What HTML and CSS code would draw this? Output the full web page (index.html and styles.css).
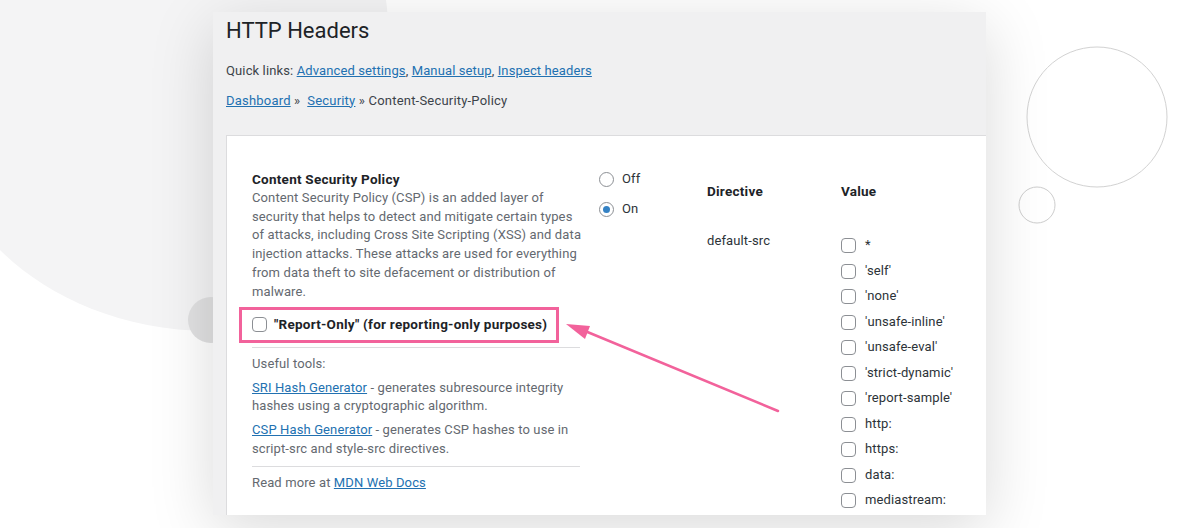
FILE: index.html
```html
<!DOCTYPE html>
<html lang="en">
<head>
    <meta charset="UTF-8">
    <title>HTTP Headers</title>
    <link rel="stylesheet" href="styles.css">
</head>
<body>
    <svg class="backdrop" width="1200" height="528" viewBox="0 0 1200 528">
        <path d="M0 0 H386 C400 90 330 331 210 331 C120 331 45 295 0 250 Z" fill="#f4f4f5"/>
        <circle cx="211" cy="320" r="23" fill="#e1e1e2"/>
        <circle cx="1097" cy="117" r="70" fill="none" stroke="#d2d2d2"/>
        <circle cx="1037" cy="205" r="18" fill="none" stroke="#cdcdcd"/>
    </svg>

    <div class="window">
        <div class="wrap">
            <h1>HTTP Headers</h1>
            <p class="quick">Quick links: <a href="#">Advanced settings</a>, <a href="#">Manual setup</a>, <a href="#">Inspect headers</a></p>
            <p class="crumbs"><a href="#">Dashboard</a> &raquo; &nbsp;<a href="#">Security</a> &raquo; Content-Security-Policy</p>

            <div class="panel">
                <div class="info">
                    <h3>Content Security Policy</h3>
                    <p class="desc">Content Security Policy (CSP) is an added layer of security that helps to detect and mitigate certain types of attacks, including Cross Site Scripting (XSS) and data injection attacks. These attacks are used for everything from data theft to site defacement or distribution of malware.</p>
                    <label class="report-only"><span class="cb"></span>"Report-Only" (for reporting-only purposes)</label>
                    <div class="tools">
                        <p>Useful tools:</p>
                        <p><a href="#">SRI Hash Generator</a> - generates subresource integrity hashes using a cryptographic algorithm.</p>
                        <p><a href="#">CSP Hash Generator</a> - generates CSP hashes to use in script-src and style-src directives.</p>
                    </div>
                    <p class="more">Read more at <a href="#">MDN Web Docs</a></p>
                </div>

                <div class="switch">
                    <label><span class="radio"></span>Off</label>
                    <label><span class="radio on"></span>On</label>
                </div>

                <div class="directive">
                    <div class="col-head">Directive</div>
                    <div class="dir-name">default-src</div>
                </div>

                <div class="values">
                    <div class="col-head">Value</div>
                    <ul>
                        <li><span class="cb"></span>*</li>
                        <li><span class="cb"></span>'self'</li>
                        <li><span class="cb"></span>'none'</li>
                        <li><span class="cb"></span>'unsafe-inline'</li>
                        <li><span class="cb"></span>'unsafe-eval'</li>
                        <li><span class="cb"></span>'strict-dynamic'</li>
                        <li><span class="cb"></span>'report-sample'</li>
                        <li><span class="cb"></span>http:</li>
                        <li><span class="cb"></span>https:</li>
                        <li><span class="cb"></span>data:</li>
                        <li><span class="cb"></span>mediastream:</li>
                    </ul>
                </div>
            </div>
        </div>
    </div>

    <svg class="arrow" width="1200" height="528" viewBox="0 0 1200 528">
        <line x1="778" y1="411" x2="585" y2="331" stroke="#f2629b" stroke-width="2.5" stroke-linecap="round"/>
        <polygon points="566,324 590,326 585,339" fill="#f2629b"/>
    </svg>
</body>
</html>
```

FILE: styles.css
```css
body {
    margin: 0;
    padding: 12px 0 0 213px;
    height: 528px;
    box-sizing: border-box;
    overflow: hidden;
    position: relative;
    background: #fff;
    font-family: Roboto, "Liberation Sans", sans-serif;
    font-size: 13px;
    letter-spacing: 0.12px;
    color: #3c434a;
}
a {
    color: #2271b1;
}
p {
    margin: 0;
}
.backdrop, .arrow {
    position: absolute;
    left: 0;
    top: 0;
}
.arrow {
    z-index: 2;
    pointer-events: none;
}
.window {
    position: relative;
    z-index: 1;
    width: 773px;
    height: 503px;
    background: #f0f0f1;
    overflow: hidden;
    box-shadow: 0 14px 60px rgba(0,0,0,0.15);
}
.wrap {
    padding-left: 13px;
}
h1 {
    margin: 0;
    padding-top: 4px;
    font-size: 22px;
    line-height: 30px;
    font-weight: 400;
    letter-spacing: 0;
    color: #1d2327;
}
.quick {
    margin-top: 15px;
    line-height: 20px;
}
.crumbs {
    margin-top: 9.5px;
    line-height: 20px;
    letter-spacing: 0.2px;
}
.panel {
    margin-top: 24.5px;
    height: 400px;
    background: #fff;
    border-top: 1px solid #dcdcde;
    border-left: 1px solid #dcdcde;
    display: grid;
    grid-template-columns: 347px 108px 134px 1fr;
    padding: 34px 0 0 25px;
    line-height: 18.8px;
}
.info {
    width: 330px;
}
.info h3, .report-only, .col-head {
    font-size: 13.5px;
    font-weight: 700;
    letter-spacing: 0.25px;
    color: #1d2327;
}
.info h3 {
    margin: 0;
}
.desc, .tools, .more {
    color: #646970;
}
.cb {
    width: 15px;
    height: 15px;
    flex: none;
    box-sizing: border-box;
    border: 1px solid #8c8f94;
    border-radius: 4px;
    background: #fff;
}
.report-only {
    display: inline-flex;
    align-items: center;
    gap: 7px;
    height: 36px;
    box-sizing: border-box;
    margin: 5px 0 0 -13px;
    padding: 0 9px 0 10px;
    border: 3px solid #f2629b;
}
.tools {
    width: 328px;
    margin-top: 4px;
    padding: 7.5px 0 7px;
    border-top: 1px solid #dcdcde;
    border-bottom: 1px solid #dcdcde;
}
.tools p + p {
    margin-top: 4.8px;
}
.more {
    margin-top: 7px;
}
.switch {
    margin-top: -2px;
}
.switch label {
    display: flex;
    align-items: center;
    gap: 8px;
    height: 22px;
    margin-bottom: 8px;
    color: #2c3338;
}
.radio {
    width: 15px;
    height: 15px;
    box-sizing: border-box;
    border: 1px solid #8c8f94;
    border-radius: 50%;
    display: flex;
    align-items: center;
    justify-content: center;
}
.radio.on::before {
    content: "";
    width: 7px;
    height: 7px;
    border-radius: 50%;
    background: #3582c4;
}
.col-head {
    margin-top: 12px;
}
.dir-name {
    margin-top: 31px;
    color: #2c3338;
}
.values ul {
    list-style: none;
    margin: 32px 0 0;
    padding: 0;
}
.values li {
    display: flex;
    align-items: center;
    gap: 9px;
    height: 25.5px;
    color: #2c3338;
}
```
